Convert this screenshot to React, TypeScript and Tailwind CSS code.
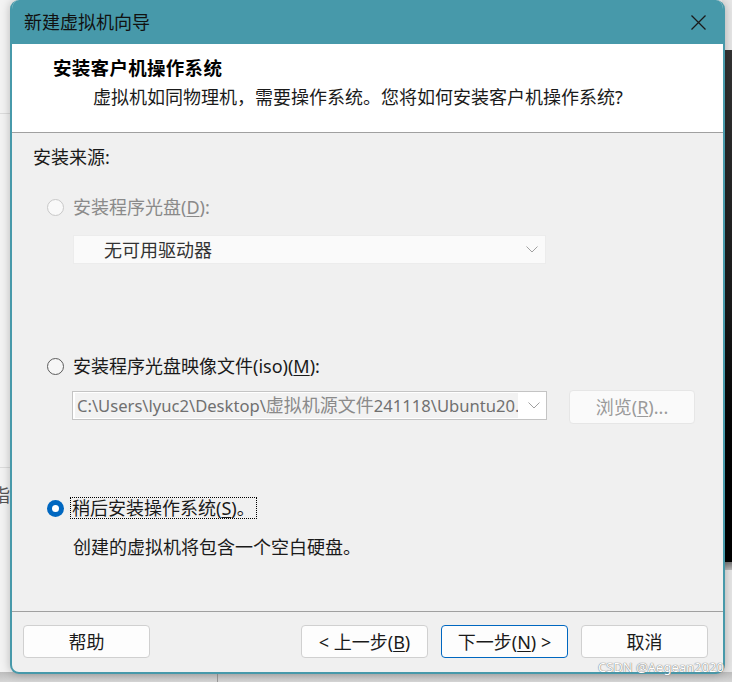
import React from "react";

const font = {
  fontFamily: '"Segoe UI", "Noto Sans", "Noto Sans CJK SC", sans-serif',
};

function Chevron() {
  return (
    <svg width="12" height="7" viewBox="0 0 12 7" className="shrink-0">
      <path d="M0.5 0.5 L6 6 L11.5 0.5" fill="none" stroke="#a0a0a0" strokeWidth="1" />
    </svg>
  );
}

function Radio({ state }: { state: "disabled" | "off" | "on" }) {
  if (state === "on") {
    return (
      <span className="flex h-[17px] w-[17px] shrink-0 items-center justify-center rounded-full bg-[#0067c0]">
        <span className="h-[7px] w-[7px] rounded-full bg-white" />
      </span>
    );
  }
  return (
    <span
      className={
        state === "disabled"
          ? "h-[17px] w-[17px] shrink-0 rounded-full border border-[#c8c8c8] bg-[#f9f9f9]"
          : "h-[17px] w-[17px] shrink-0 rounded-full border border-[#5c5c5c] bg-[#f6f6f6]"
      }
    />
  );
}

function FooterButton({
  children,
  primary,
}: {
  children: React.ReactNode;
  primary?: boolean;
}) {
  return (
    <button
      className={
        primary
          ? "flex h-[33px] w-[127px] items-center justify-center rounded-[4px] border border-[#0067c0] bg-[#fdfdfd] pt-px text-[18px] text-[#1a1a1a]"
          : "flex h-[33px] w-[127px] items-center justify-center rounded-[4px] border border-[#d0d0d0] bg-[#fdfdfd] pt-px text-[18px] text-[#1a1a1a]"
      }
    >
      {children}
    </button>
  );
}

export default function App() {
  return (
    <div className="relative h-[682px] w-[732px] overflow-hidden bg-[#f3f3f3]" style={font}>
      {/* desktop behind the dialog */}
      <div className="absolute left-0 top-[113px] h-px w-[12px] bg-[#dcdcdc]" />
      <div className="absolute left-0 top-[467px] h-px w-[12px] bg-[#dcdcdc]" />
      <div className="absolute left-[-8px] top-[483px] text-[18px] leading-[24px] text-[#555]">指</div>
      <div className="absolute right-0 top-0 h-[682px] w-[10px] bg-[#e6e6e6]">
        <div className="mt-[50px] h-[512px] bg-gradient-to-b from-[#333] via-[#1a1a1a] to-black" />
        <div className="h-[8px] bg-gradient-to-b from-[#777] to-[#bbb]" />
      </div>
      <div className="absolute bottom-0 left-0 flex h-[10px] w-[732px] bg-gradient-to-b from-[#bdbdbd] to-[#d6d6d6]">
        <div className="ml-[217px] h-full w-px bg-[#9a9a9a]" />
      </div>

      {/* dialog window */}
      <div className="absolute left-[10px] top-0 flex h-[674px] w-[715px] flex-col overflow-hidden rounded-[9px] border-2 border-t-0 border-[#4799aa] bg-[#f0f0f0] shadow-[0_0_10px_rgba(0,0,0,0.25)]">
        {/* title bar */}
        <div className="flex h-[44px] shrink-0 items-center justify-between bg-[#4799aa] pl-[12px] pr-[17px]">
          <span className="text-[18px] leading-[24px] text-[#111]">新建虚拟机向导</span>
          <svg width="15" height="15" viewBox="0 0 15 15">
            <path d="M0.5 0.5 L14.5 14.5 M14.5 0.5 L0.5 14.5" stroke="#1a1a1a" strokeWidth="1.3" />
          </svg>
        </div>

        {/* header */}
        <div className="h-[89px] shrink-0 border-b border-[#a0a0a0] bg-white pl-[41px] pt-[12px]">
          <div className="text-[18.5px] font-bold leading-[24px] tracking-[0.3px] text-black">安装客户机操作系统</div>
          <div className="ml-[40px] mt-[5px] text-[18px] leading-[24px] text-[#1a1a1a]">
            虚拟机如同物理机，需要操作系统。您将如何安装客户机操作系统?
          </div>
        </div>

        {/* body */}
        <div className="flex h-[479px] shrink-0 flex-col border-b border-[#a0a0a0] pl-[21px] pt-[12px] text-[18px] leading-[24px]">
          <div className="text-[#1a1a1a]">安装来源:</div>

          <div className="mt-[26px] flex items-center gap-[9px] pl-[14px] text-[#8a8a8a]">
            <Radio state="disabled" />
            <span>
              安装程序光盘(<span className="underline underline-offset-2">D</span>):
            </span>
          </div>
          <div className="ml-[40px] mt-[16px] flex h-[29px] w-[473px] items-center justify-between border border-[#ececec] bg-[#fafafa] pl-[30px] pr-[7px] text-[#333]">
            <span>无可用驱动器</span>
            <Chevron />
          </div>

          <div className="mt-[90px] flex items-center gap-[9px] pl-[14px] text-[#1a1a1a]">
            <Radio state="off" />
            <span>
              安装程序光盘映像文件(iso)(<span className="underline underline-offset-2">M</span>):
            </span>
          </div>
          <div className="ml-[39px] mt-[12px] flex items-start gap-[22px]">
            <div className="mt-px flex h-[29px] w-[475px] items-center border border-[#c4c4c4] bg-white pl-[2px] pr-[6px]">
              <div className="h-[25px] w-[443px] overflow-hidden whitespace-nowrap bg-[#f2f2f2] pl-[2px] leading-[25px] text-[#707070]">
                <span className="text-[16.6px]">C:\Users\lyuc2\Desktop\</span>
                <span className="text-[#8a8a8a]">虚拟机源文件</span>
                <span className="text-[16.6px]">241118\Ubuntu20.04</span>
              </div>
              <div className="flex flex-1 justify-end">
                <Chevron />
              </div>
            </div>
            <div className="flex h-[34px] w-[126px] items-center justify-center rounded-[4px] border border-[#e6e6e6] bg-[#fafafa] text-[#9a9a9a]">
              浏览(<span className="underline underline-offset-2">R</span>)...
            </div>
          </div>

          <div className="mt-[73px] flex items-center gap-[6px] pl-[14px] text-[#1a1a1a]">
            <Radio state="on" />
            <span className="border border-dotted border-black px-px leading-[20px]">
              稍后安装操作系统(<span className="underline underline-offset-2">S</span>)。
            </span>
          </div>
          <div className="ml-[40px] mt-[16px] text-[#1a1a1a]">创建的虚拟机将包含一个空白硬盘。</div>
        </div>

        {/* footer */}
        <div className="flex flex-1 items-start pl-[11px] pr-[15px] pt-[13px]">
          <FooterButton>帮助</FooterButton>
          <div className="ml-auto flex gap-[13px]">
            <FooterButton>
              &lt; 上一步(<span className="underline underline-offset-2">B</span>)
            </FooterButton>
            <FooterButton primary>
              下一步(<span className="underline underline-offset-2">N</span>) &gt;
            </FooterButton>
            <FooterButton>取消</FooterButton>
          </div>
        </div>
      </div>

      {/* watermark */}
      <div className="absolute left-[598px] top-[659px] text-[13px] leading-[16px] text-white [text-shadow:0_0_1px_#777,0_0_1px_#777]">
        CSDN @Aegean2020
      </div>
    </div>
  );
}
